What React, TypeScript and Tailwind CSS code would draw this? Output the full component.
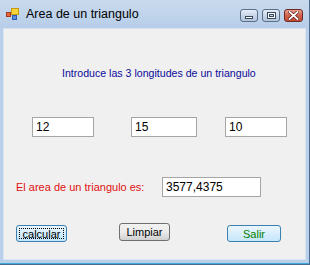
import React from 'react';

function AppIcon() {
  return (
    <svg width="13" height="12" viewBox="0 0 13 12">
      <rect x="0.5" y="4.5" width="4" height="4" fill="#e8643c" stroke="#a33a1a" strokeWidth="1" />
      <rect x="5.5" y="0.5" width="7" height="6" fill="#f7d43a" stroke="#c69a10" strokeWidth="1" />
      <rect x="6.5" y="7.5" width="4" height="4" fill="#5a8fe0" stroke="#2c5bb0" strokeWidth="1" />
    </svg>
  );
}

function CaptionButton({ kind }: { kind: 'min' | 'max' | 'close' }) {
  const isClose = kind === 'close';
  return (
    <div
      className={
        'flex items-center justify-center h-[13px] rounded-[3px] border ' +
        (isClose
          ? 'w-[19px] border-[#6d2a22] bg-gradient-to-b from-[#e8a093] via-[#d0624d] to-[#c34a33]'
          : 'w-[18px] border-[#5b6f86] bg-gradient-to-b from-[#e6eef8] via-[#c8d6e8] to-[#b3c5dc]')
      }
    >
      {kind === 'min' && <div className="w-[8px] h-[3px] mt-[5px] bg-white border border-[#3a4a5e]" />}
      {kind === 'max' && (
        <div className="w-[9px] h-[7px] border border-[#3a4a5e] bg-white flex items-center justify-center">
          <div className="w-[5px] h-[3px] border border-[#3a4a5e] bg-[#c8d6e8]" />
        </div>
      )}
      {isClose && (
        <svg width="11" height="9" viewBox="0 0 11 9">
          <path d="M1.5 1 L9.5 8 M9.5 1 L1.5 8" stroke="#5a1a12" strokeWidth="3.2" strokeLinecap="square" />
          <path d="M1.5 1 L9.5 8 M9.5 1 L1.5 8" stroke="#ffffff" strokeWidth="1.8" strokeLinecap="square" />
        </svg>
      )}
    </div>
  );
}

function TextBox({ value, width }: { value: string; width: string }) {
  return (
    <div className={`${width} h-[20px] bg-white border border-[#a5a5a5] flex items-center pl-[3px] text-[12px] text-black leading-none`}>
      {value}
    </div>
  );
}

export default function App() {
  const font = { fontFamily: '"Liberation Sans", Arial, sans-serif' };
  return (
    <div className="w-[310px] h-[265px] flex flex-col bg-[#b9d0ea] border-r border-b border-[#4c6c8f]" style={font}>
      {/* Title bar */}
      <div className="h-[28px] flex items-center pl-[6px] pr-[6px] bg-gradient-to-b from-[#c9daee] to-[#b7cde8]">
        <AppIcon />
        <span className="ml-[7px] text-[12.5px] text-black">Area de un triangulo</span>
        <div className="ml-auto flex items-center gap-[4px] mt-[2px]">
          <CaptionButton kind="min" />
          <CaptionButton kind="max" />
          <CaptionButton kind="close" />
        </div>
      </div>

      {/* Client area */}
      <div className="flex-1 mx-[3px] mb-[3px] bg-[#f0f0f0] border border-[#d8e3ef] flex flex-col text-[11px] leading-[14px]">
        <div className="mt-[37px] pl-[58px] text-[10.6px] text-[#0a0a9a]">Introduce las 3 longitudes de un triangulo</div>

        <div className="mt-[37px] flex items-center">
          <div className="ml-[28px]"><TextBox value="12" width="w-[62px]" /></div>
          <div className="ml-[37px]"><TextBox value="15" width="w-[66px]" /></div>
          <div className="ml-[28px]"><TextBox value="10" width="w-[62px]" /></div>
        </div>

        <div className="mt-[40px] flex items-center">
          <span className="ml-[12px] text-[#e01010]">El area de un triangulo es:</span>
          <div className="ml-auto mr-[44px]"><TextBox value="3577,4375" width="w-[99px]" /></div>
        </div>

        <div className="mt-[26px] flex items-start">
          <div className="ml-[12px] mt-[2px] w-[51px] h-[17px] rounded-[3px] border border-[#3c7fb1] bg-gradient-to-b from-[#eaf6fd] to-[#bee6fd] p-[2px]">
            <div className="w-full h-full border border-dotted border-black flex items-center justify-center text-black">calcular</div>
          </div>
          <div className="ml-[52px] w-[51px] h-[18px] rounded-[3px] border border-[#707070] bg-gradient-to-b from-[#f2f2f2] via-[#ebebeb] to-[#cfcfcf] flex items-center justify-center text-black">
            Limpiar
          </div>
          <div className="ml-[57px] mt-[2px] w-[54px] h-[17px] rounded-[3px] border border-[#3c7fb1] bg-gradient-to-b from-[#eaf6fd] to-[#c6e6fb] flex items-center justify-center text-[#008000]">
            Salir
          </div>
        </div>
      </div>
      <div className="h-[1px] mx-0 bg-[#3fa9d8]" />
    </div>
  );
}
